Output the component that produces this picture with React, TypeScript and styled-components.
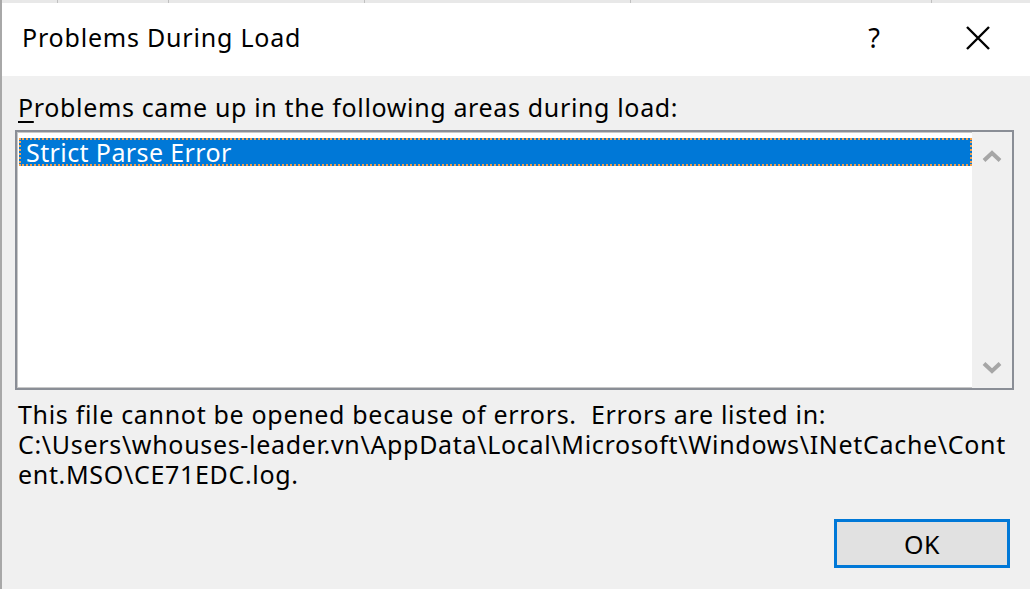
import styled, { createGlobalStyle } from 'styled-components';

const GlobalStyle = createGlobalStyle`
  html, body {
    margin: 0;
    padding: 0;
    background: #f0f0f0;
  }
  body {
    font-family: 'Noto Sans', 'Open Sans', sans-serif;
  }
`;

const Window = styled.div`
  width: 1030px;
  height: 589px;
  box-sizing: border-box;
  border-left: 2px solid #a8a8a8;
  background: #f0f0f0;
  display: flex;
  flex-direction: column;
  overflow: hidden;
`;

const BehindStrip = styled.div`
  height: 3px;
  background: #e8e8e8;
  display: flex;
`;

const StripCell = styled.div<{ $w: number }>`
  width: ${(p) => p.$w}px;
  border-right: 1px solid #c0c0c0;
`;

const TitleBar = styled.div`
  height: 73px;
  background: #ffffff;
  display: flex;
  align-items: center;
  padding-left: 20px;
`;

const Title = styled.div`
  flex: 1;
  font-size: 25px;
  letter-spacing: 0.8px;
  color: #000;
  padding-bottom: 6px;
`;

const TitleButton = styled.div`
  width: 104px;
  height: 73px;
  display: flex;
  align-items: center;
  justify-content: center;
  font-size: 27px;
  color: #000;
  padding-bottom: 4px;
  box-sizing: border-box;
`;

const Body = styled.div`
  flex: 1;
  display: flex;
  flex-direction: column;
  padding: 14px 16px 0 13px;
`;

const Label = styled.div`
  font-size: 25px;
  letter-spacing: 0.65px;
  color: #000;
  line-height: 34px;
  padding-left: 3px;
  u {
    text-decoration-thickness: 2px;
    text-underline-offset: 4px;
  }
`;

const ListBox = styled.div`
  margin-top: 6px;
  height: 260px;
  box-sizing: border-box;
  border: 2px solid #8a8e96;
  box-shadow: inset 0 0 0 1px #c8c8c8;
  background: #ffffff;
  display: flex;
`;

const Items = styled.div`
  flex: 1;
  padding: 6px 0 0 2px;
`;

const Item = styled.div<{ $selected?: boolean }>`
  height: 28px;
  line-height: 25px;
  box-sizing: border-box;
  padding-left: 5px;
  font-size: 25px;
  letter-spacing: 0.4px;
  color: ${(p) => (p.$selected ? '#ffffff' : '#000')};
  background: ${(p) => (p.$selected ? '#0078d7' : 'transparent')};
  border: ${(p) => (p.$selected ? '2px dotted #f5a04a' : 'none')};
`;

const ScrollBar = styled.div`
  width: 40px;
  background: #f0f0f0;
  display: flex;
  flex-direction: column;
  justify-content: space-between;
  align-items: center;
  padding: 18px 0 14px;
`;

const Message = styled.div`
  margin-top: 9px;
  padding-left: 3px;
  display: flex;
  flex-direction: column;
`;

const MessageLine = styled.div`
  height: 30px;
  font-size: 25px;
  letter-spacing: 0.68px;
  line-height: 30px;
  color: #000;
  white-space: nowrap;
`;

const Footer = styled.div`
  display: flex;
  justify-content: flex-end;
  margin-top: 30px;
  padding-right: 4px;
`;

const OkButton = styled.button`
  width: 176px;
  height: 49px;
  box-sizing: border-box;
  border: 3px solid #0078d7;
  background: #e1e1e1;
  font-family: 'Noto Sans', 'Open Sans', sans-serif;
  font-size: 25px;
  letter-spacing: 0.5px;
  color: #000;
  padding: 0;
`;

const Chevron = ({ up }: { up?: boolean }) => (
  <svg width="20" height="12" viewBox="0 0 20 12">
    <path
      d={up ? 'M2 10.5 L10 3 L18 10.5' : 'M2 1.5 L10 9 L18 1.5'}
      fill="none"
      stroke="#a6a6a6"
      strokeWidth="4"
    />
  </svg>
);

export default function App() {
  return (
    <>
      <GlobalStyle />
      <Window>
        <BehindStrip>
          <StripCell $w={55} />
          <StripCell $w={110} />
          <StripCell $w={195} />
          <StripCell $w={265} />
          <StripCell $w={300} />
        </BehindStrip>
        <TitleBar>
          <Title>Problems During Load</Title>
          <TitleButton>?</TitleButton>
          <TitleButton>
            <svg width="26" height="26" viewBox="0 0 26 26">
              <path d="M2 2 L24 24 M24 2 L2 24" stroke="#000" strokeWidth="2.4" />
            </svg>
          </TitleButton>
        </TitleBar>
        <Body>
          <Label>
            <u>P</u>roblems came up in the following areas during load:
          </Label>
          <ListBox>
            <Items>
              <Item $selected>Strict Parse Error</Item>
            </Items>
            <ScrollBar>
              <Chevron up />
              <Chevron />
            </ScrollBar>
          </ListBox>
          <Message>
            <MessageLine>
              This file cannot be opened because of errors.&nbsp; Errors are listed in:
            </MessageLine>
            <MessageLine>
              C:\Users\whouses-leader.vn\AppData\Local\Microsoft\Windows\INetCache\Cont
            </MessageLine>
            <MessageLine>ent.MSO\CE71EDC.log.</MessageLine>
          </Message>
          <Footer>
            <OkButton>OK</OkButton>
          </Footer>
        </Body>
      </Window>
    </>
  );
}
